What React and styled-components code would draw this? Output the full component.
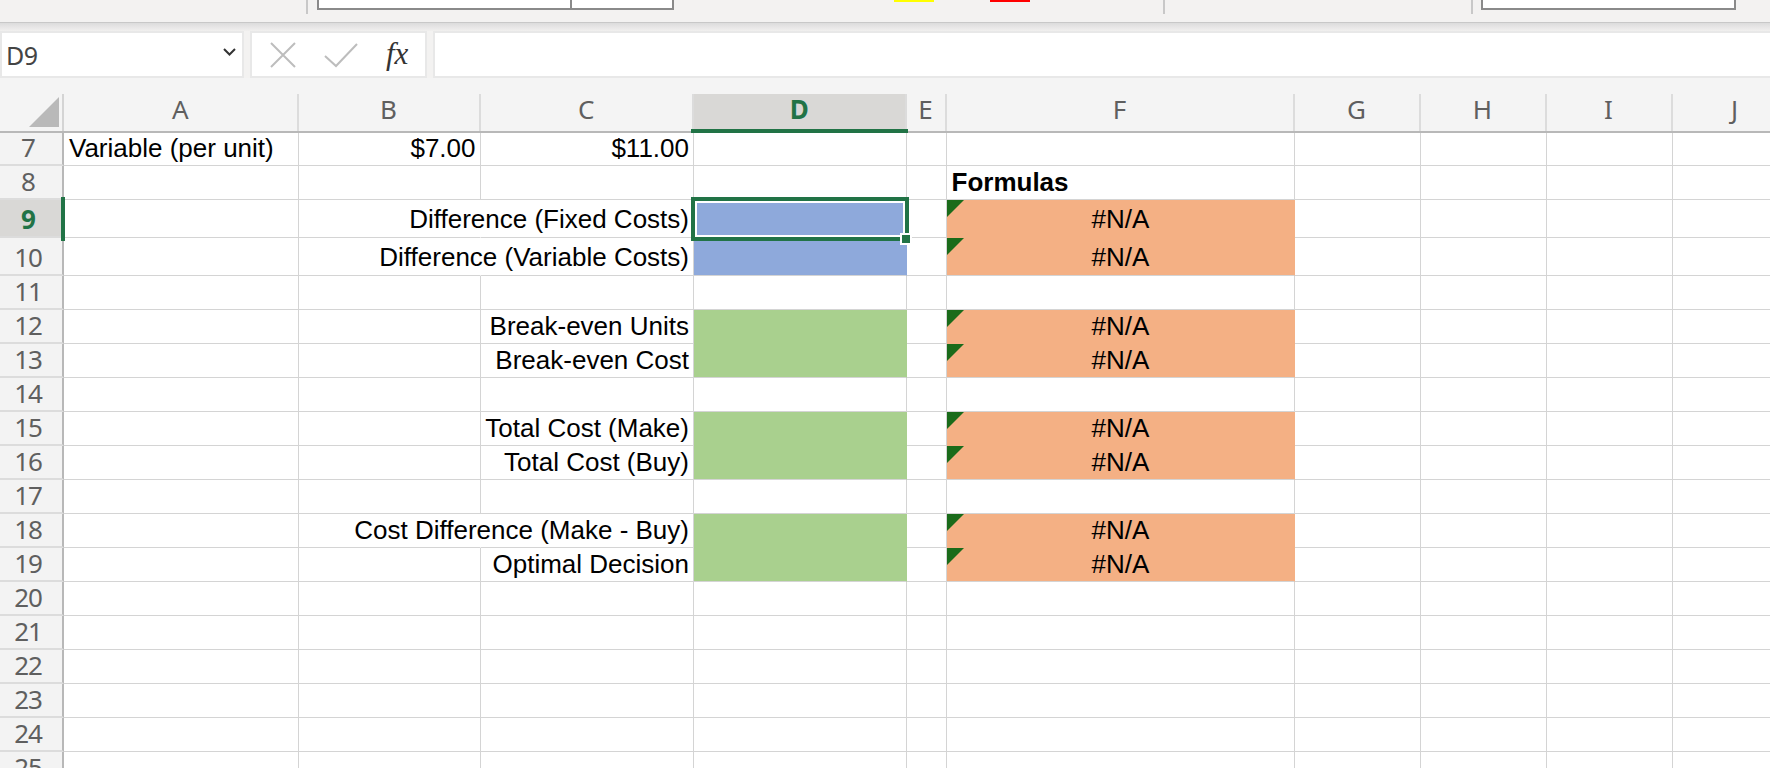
import React from "react";
import styled, { createGlobalStyle } from "styled-components";

const GlobalStyle = createGlobalStyle`
  html, body {
    margin: 0;
    padding: 0;
    background: #fff;
    overflow: hidden;
  }
  #root {
    width: 1770px;
    height: 768px;
    overflow: hidden;
  }
`;

const GRID = "#d4d4d4";
const GREEN = "#217346";

const columns = [
  { key: "A", width: 234.5 },
  { key: "B", width: 182 },
  { key: "C", width: 213.5 },
  { key: "D", width: 212.5, active: true },
  { key: "E", width: 40 },
  { key: "F", width: 348 },
  { key: "G", width: 126 },
  { key: "H", width: 126 },
  { key: "I", width: 126 },
  { key: "J", width: 126 }
];

const labels = {
  9: "Difference (Fixed Costs)",
  10: "Difference (Variable Costs)",
  12: "Break-even Units",
  13: "Break-even Cost",
  15: "Total Cost (Make)",
  16: "Total Cost (Buy)",
  18: "Cost Difference (Make - Buy)",
  19: "Optimal Decision"
};

const rowHeights = {
  7: 33, 8: 34, 9: 38, 10: 38, 11: 34, 12: 34, 13: 34, 14: 34, 15: 34, 16: 34,
  17: 34, 18: 34, 19: 34, 20: 34, 21: 34, 22: 34, 23: 34, 24: 34, 25: 34
};

const blueRows = [9, 10];
const greenRows = [12, 13, 15, 16, 18, 19];

const Page = styled.div`
  width: 1770px;
  height: 768px;
  overflow: hidden;
  background: #f3f2f1;
  display: flex;
  flex-direction: column;
`;

const Ribbon = styled.div`
  height: 22px;
  flex: none;
  display: flex;
  align-items: flex-start;
  border-bottom: 1px solid #c8c8c8;
  overflow: hidden;
`;

const RibbonSep = styled.div`
  width: 2px;
  height: 14px;
  flex: none;
  background: #c8c8c8;
  margin-left: ${(p) => p.$left}px;
`;

const FieldBox = styled.div`
  height: 8px;
  width: ${(p) => p.$width}px;
  flex: none;
  margin-left: ${(p) => p.$left}px;
  background: #fff;
  border: 2px solid #8a8a8a;
  border-top: 0;
  display: flex;
  justify-content: flex-end;
`;

const FieldDivider = styled.div`
  width: 2px;
  background: #8a8a8a;
  margin-right: ${(p) => p.$right}px;
`;

const Swatch = styled.div`
  width: 40px;
  height: 2px;
  flex: none;
  background: ${(p) => p.$color};
  margin-left: ${(p) => p.$left}px;
`;

const RibbonShadow = styled.div`
  height: 8px;
  flex: none;
  background: linear-gradient(#dcdcdc, #f1f0ef);
`;

const FormulaBar = styled.div`
  height: 47px;
  flex: none;
  display: flex;
  gap: 6px;
`;

const NameBox = styled.div`
  width: 244px;
  flex: none;
  box-sizing: border-box;
  background: #fff;
  border: 2px solid #e8e8e8;
  display: flex;
  align-items: center;
  justify-content: space-between;
  padding: 0 6px 0 4px;
  font: 25px "Noto Sans", sans-serif;
  letter-spacing: -0.5px;
  color: #444;
`;

const ActionBox = styled.div`
  width: 177px;
  flex: none;
  box-sizing: border-box;
  background: #fff;
  border: 2px solid #e8e8e8;
  display: flex;
  align-items: center;
  padding-left: 18px;
`;

const FxLabel = styled.span`
  font: italic 31px "Liberation Serif", serif;
  color: #333;
  margin-left: 28px;
  line-height: 1;
  padding-bottom: 2px;
`;

const FormulaInput = styled.div`
  flex: 1;
  box-sizing: border-box;
  background: #fff;
  border: 2px solid #e8e8e8;
  border-right: 0;
`;

const HeaderBand = styled.div`
  flex: none;
  padding-top: 16px;
  background: #f4f4f4;
`;

const HeaderRow = styled.div`
  height: 37px;
  display: flex;
  border-bottom: 2px solid #b8b8b8;
`;

const Corner = styled.div`
  width: 64px;
  flex: none;
  box-sizing: border-box;
  padding: 3px 0 0 29px;
  border-right: 2px solid #d4d4d4;
`;

const ColumnHead = styled.div`
  flex: none;
  box-sizing: border-box;
  position: relative;
  width: ${(p) => p.$width}px;
  display: flex;
  align-items: center;
  justify-content: center;
  padding-bottom: 7px;
  border-right: 2px solid #dcdcdc;
  font: ${(p) => (p.$active ? 700 : 400)} 26px/1 "Noto Sans", sans-serif;
  color: ${(p) => (p.$active ? GREEN : "#5f5f5f")};
  background: ${(p) => (p.$active ? "#d9d8d6" : "transparent")};

  ${(p) =>
    p.$active &&
    `&::after {
      content: "";
      position: absolute;
      left: -3px;
      right: -3px;
      bottom: -2px;
      height: 4px;
      background: ${GREEN};
    }`}
`;

const Sheet = styled.div`
  flex: 1;
  background: #fff;
  position: relative;
`;

const Row = styled.div`
  display: flex;
  height: ${(p) => p.$height}px;
  box-sizing: border-box;
`;

const RowHead = styled.div`
  width: 64px;
  flex: none;
  box-sizing: border-box;
  display: flex;
  align-items: center;
  justify-content: center;
  padding: ${(p) => (p.$tall ? "2px 6px 0 0" : "0 6px 3px 0")};
  font: ${(p) => (p.$active ? 700 : 400)} 26px/1 "Noto Sans", sans-serif;
  letter-spacing: -1px;
  color: ${(p) => (p.$active ? GREEN : "#5f5f5f")};
  background: ${(p) => (p.$active ? "#d9d8d6" : "#f3f3f3")};
  border-right: 2px solid #b8b8b8;
  border-bottom: 2px solid #dcdcdc;
`;

const Cell = styled.div`
  flex: none;
  box-sizing: border-box;
  position: relative;
  width: ${(p) => p.$width}px;
  display: flex;
  align-items: center;
  padding: ${(p) => (p.$tall ? "2px 4px 0 5px" : "0 4px 1px 5px")};
  font: ${(p) => (p.$bold ? 700 : 400)} 26px "Liberation Sans", Arial, sans-serif;
  color: #000;
  white-space: nowrap;
  justify-content: ${(p) => p.$align || "flex-start"};
  background: ${(p) => p.$fill || "transparent"};
  border-right: 1px solid ${(p) => (p.$noRight ? "transparent" : p.$fill || GRID)};
  border-bottom: 1px solid ${(p) => (p.$fill && !p.$last ? p.$fill : GRID)};
`;

const ErrorFlag = styled.span`
  position: absolute;
  left: 0;
  top: 0;
  width: 0;
  height: 0;
  border-top: 17px solid #1a6b1a;
  border-right: 17px solid transparent;
`;

const Selection = styled.div`
  position: absolute;
  left: 691px;
  top: 64px;
  width: 218px;
  height: 44px;
  box-sizing: border-box;
  border: 4px solid ${GREEN};
  outline: 2px solid #fff;
  outline-offset: -6px;
  pointer-events: none;
`;

const Handle = styled.span`
  position: absolute;
  right: -7px;
  bottom: -8px;
  width: 8px;
  height: 8px;
  background: ${GREEN};
  border: 2px solid #fff;
`;

const ActiveMark = styled.div`
  position: absolute;
  left: 61px;
  top: 64px;
  width: 4px;
  height: 44px;
  background: ${GREEN};
`;

function cellProps(row, col) {
  const props = {};
  if (col === "D" && blueRows.includes(row)) props.$fill = "#8ea9db";
  if (col === "D" && greenRows.includes(row)) props.$fill = "#a9d08e";
  if (col === "F" && labels[row]) props.$fill = "#f4b084";
  if (props.$fill) props.$last = !labels[row + 1];
  // the label text runs over from C into B
  if (col === "B" && [9, 10, 18].includes(row)) props.$noRight = true;
  return props;
}

function cellContent(row, col) {
  if (row === 7 && col === "A") return "Variable (per unit)";
  if (row === 7 && col === "B") return "$7.00";
  if (row === 7 && col === "C") return "$11.00";
  if (row === 8 && col === "F") return "Formulas";
  if (col === "C") return labels[row] || null;
  if (col === "F" && labels[row]) return "#N/A";
  return null;
}

function alignFor(row, col) {
  if (col === "F") return row === 8 ? "flex-start" : "center";
  if (col === "B" || col === "C") return "flex-end";
  return "flex-start";
}

const App = () => {
  const rows = Object.keys(rowHeights).map(Number);
  return (
    <Page>
      <GlobalStyle />
      <Ribbon>
        <RibbonSep $left={306} />
        <FieldBox $left={9} $width={353}>
          <FieldDivider $right={100} />
        </FieldBox>
        <Swatch $left={220} $color="#ffff00" />
        <Swatch $left={56} $color="#ff0000" />
        <RibbonSep $left={133} />
        <RibbonSep $left={306} />
        <FieldBox $left={8} $width={251} />
      </Ribbon>
      <RibbonShadow />
      <FormulaBar>
        <NameBox>
          D9
          <svg width="13" height="26" viewBox="0 0 13 26" fill="none" style={{ marginBottom: 6 }}>
            <path d="M1 10 6.5 15.5 12 10" stroke="#333" strokeWidth="2" />
          </svg>
        </NameBox>
        <ActionBox>
          <svg width="26" height="26" viewBox="0 0 26 26" fill="none">
            <path d="M1 1 25 25M25 1 1 25" stroke="#bdbdbd" strokeWidth="2" />
          </svg>
          <svg width="34" height="26" viewBox="0 0 34 26" fill="none" style={{ marginLeft: 28 }}>
            <path d="M1 14 12 24 33 2" stroke="#bdbdbd" strokeWidth="2" />
          </svg>
          <FxLabel>fx</FxLabel>
        </ActionBox>
        <FormulaInput />
      </FormulaBar>
      <HeaderBand>
        <HeaderRow>
          <Corner>
            <svg width="30" height="30" viewBox="0 0 30 30">
              <path d="M30 0V30H0Z" fill="#b9b9b9" />
            </svg>
          </Corner>
          {columns.map((c) => (
            <ColumnHead key={c.key} $width={c.width} $active={c.active}>
              {c.key}
            </ColumnHead>
          ))}
        </HeaderRow>
      </HeaderBand>
      <Sheet>
        {rows.map((row) => (
          <Row key={row} $height={rowHeights[row]}>
            <RowHead $active={row === 9} $tall={row === 9 || row === 10}>
              {row}
            </RowHead>
            {columns.map((c) => (
              <Cell
                key={c.key}
                $width={c.width}
                $align={alignFor(row, c.key)}
                $bold={row === 8 && c.key === "F"}
                $tall={row === 9 || row === 10}
                {...cellProps(row, c.key)}
              >
                {c.key === "F" && labels[row] && <ErrorFlag />}
                {cellContent(row, c.key)}
              </Cell>
            ))}
          </Row>
        ))}
        <ActiveMark />
        <Selection>
          <Handle />
        </Selection>
      </Sheet>
    </Page>
  );
};

export default App;
